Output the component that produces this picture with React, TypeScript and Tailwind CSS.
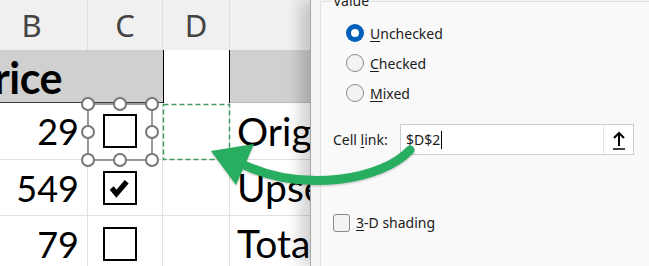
import React from "react";

// Spreadsheet columns: B (cut off on the left), C, D, E
const ROWS = [
  { price: "29", checked: false, label: "Original price", h: "h-[57px]" },
  { price: "549", checked: true, label: "Upsell", h: "h-[56px]" },
  { price: "79", checked: false, label: "Total", h: "h-[56px]" },
];

const cellFont = { fontFamily: "Lato, 'Open Sans', sans-serif" };
const uiFont = { fontFamily: "'Noto Sans', 'Open Sans', sans-serif" };

function CellCheckbox({ checked }: { checked: boolean }) {
  return (
    <div className="relative w-[34px] h-[34px] border-[2.5px] border-black bg-white">
      {checked && (
        <svg viewBox="0 0 29 29" className="absolute inset-0 w-full h-full">
          <path d="M6.5 14.5 L11 20 L21 8.5" fill="none" stroke="black" strokeWidth="5" strokeLinejoin="miter" />
        </svg>
      )}
    </div>
  );
}

function Radio({ selected, label, hotkey }: { selected?: boolean; label: string; hotkey: string }) {
  return (
    <div className="h-[30px] flex items-center gap-[6px]">
      {selected ? (
        <span className="w-[18px] h-[18px] rounded-full bg-[#005fb8] flex items-center justify-center">
          <span className="w-[8px] h-[8px] rounded-full bg-white" />
        </span>
      ) : (
        <span className="w-[18px] h-[18px] rounded-full border border-[#8a8a8a] bg-[#f3f3f3]" />
      )}
      <span className="text-[14px] text-[#1b1b1b]">
        <u className="underline-offset-2">{hotkey}</u>
        {label.slice(hotkey.length)}
      </span>
    </div>
  );
}

function Overlay() {
  const handles = [
    [88, 104], [120, 104], [152, 104],
    [88, 132], [152, 132],
    [88, 160], [120, 160], [152, 160],
  ];
  return (
    <svg className="absolute inset-0 pointer-events-none" width="649" height="266" viewBox="0 0 649 266">
      {/* copied cell marquee */}
      <rect x="163.5" y="104.5" width="66" height="55" fill="none" stroke="#3f9a62" strokeWidth="1.5" strokeDasharray="5 3" />
      {/* selected form control */}
      <rect x="88" y="104" width="64" height="56" fill="none" stroke="#7a7a7a" strokeWidth="1.5" />
      {handles.map(([cx, cy]) => (
        <circle key={`${cx}-${cy}`} cx={cx} cy={cy} r="6" fill="white" stroke="#777" strokeWidth="2" />
      ))}
      {/* green arrow */}
      <g style={{ filter: "drop-shadow(0 1px 1px rgba(0,0,0,0.25))" }}>
        <path d="M410 150 C 382 180, 305 193, 244 165" fill="none" stroke="#27ae60" strokeWidth="9" strokeLinecap="round" />
        <polygon points="211,151 254,144 236,185" fill="#27ae60" />
      </g>
    </svg>
  );
}

export default function App() {
  return (
    <div className="relative w-[649px] h-[266px] overflow-hidden flex bg-white">
      {/* ── SPREADSHEET ── */}
      <div className="w-[310px] shrink-0 overflow-hidden" style={cellFont}>
        {/* column headers */}
        <div className="flex h-[50px] bg-[#f0f0f0] text-[#444] text-[31px]" style={uiFont}>
          <div className="w-[88px] flex items-center justify-center pr-[24px] border-r border-[#dcdcdc]">B</div>
          <div className="w-[75px] flex items-center justify-center border-r border-[#dcdcdc]">C</div>
          <div className="w-[67px] flex items-center justify-center border-r border-[#dcdcdc]">D</div>
          <div className="flex-1" />
        </div>

        {/* title row */}
        <div className="flex h-[53px]">
          <div className="w-[163px] bg-[#d0d0d0] border-b border-[#3a3a3a] flex items-center justify-end pr-[101px] overflow-hidden">
            <span className="text-[43px] font-bold text-black whitespace-nowrap tracking-[-0.5px] pt-[4px]">Price</span>
          </div>
          <div className="w-[67px] bg-white border-x border-black" />
          <div className="flex-1 bg-[#d0d0d0] border-b border-[#bdbdbd]" />
        </div>

        {/* data rows */}
        {ROWS.map((row) => (
          <div key={row.price} className={`flex ${row.h} border-b border-[#e1e1e1]`}>
            <div className="w-[88px] flex items-center justify-end pr-[8px] border-r border-[#e1e1e1] text-[36px] text-black">
              {row.price}
            </div>
            <div className="w-[75px] flex items-center pl-[15px] border-r border-[#e1e1e1]">
              <CellCheckbox checked={row.checked} />
            </div>
            <div className="w-[67px] border-r border-[#e1e1e1]" />
            <div className="flex-1 flex items-center pl-[7px] overflow-hidden whitespace-nowrap text-[39px] text-black">
              {row.label}
            </div>
          </div>
        ))}
      </div>

      {/* ── FORMAT CONTROL DIALOG ── */}
      <div
        className="flex-1 flex border-l border-[#a6a6a6] bg-[#f4f4f4] shadow-[-10px_0_14px_rgba(0,0,0,0.18)] pl-[9px]"
        style={uiFont}
      >
        <div className="flex-1 mt-[1px] border-l border-t border-[#e2e2e2] bg-[#f9f9f9] text-[#1b1b1b]">
          <div className="h-0">
            <span className="relative -top-[14px] ml-[11px] px-[1px] bg-[#f9f9f9] text-[14px]">Value</span>
          </div>

          <div className="mt-[16px] pl-[25px] flex flex-col">
            <Radio selected label="Unchecked" hotkey="U" />
            <Radio label="Checked" hotkey="C" />
            <Radio label="Mixed" hotkey="M" />
          </div>

          <div className="mt-[16px] pl-[12px] flex items-center">
            <span className="w-[67px] text-[14px]">
              Cell <u className="underline-offset-2">l</u>ink:
            </span>
            <div className="w-[234px] h-[31px] flex border border-[#cdcdcd] bg-white">
              <div className="flex-1 flex items-center pl-[5px] text-[14px]">
                $D$2<span className="w-px h-[18px] bg-black ml-[1px]" />
              </div>
              <div className="w-[30px] flex items-center justify-center border-l border-[#e3e3e3]">
                <svg width="16" height="20" viewBox="0 0 16 20">
                  <path d="M8 3 V16 M3 8 L8 3 L13 8" fill="none" stroke="black" strokeWidth="2" />
                  <path d="M2 19 H14" stroke="black" strokeWidth="1.5" />
                </svg>
              </div>
            </div>
          </div>

          <div className="mt-[57px] pl-[12px] flex items-center gap-[6px]">
            <span className="w-[17px] h-[18px] rounded-[3px] border border-[#8a8a8a] bg-[#f3f3f3]" />
            <span className="text-[14px]">
              <u className="underline-offset-2">3</u>-D shading
            </span>
          </div>
        </div>
      </div>

      <Overlay />
    </div>
  );
}
